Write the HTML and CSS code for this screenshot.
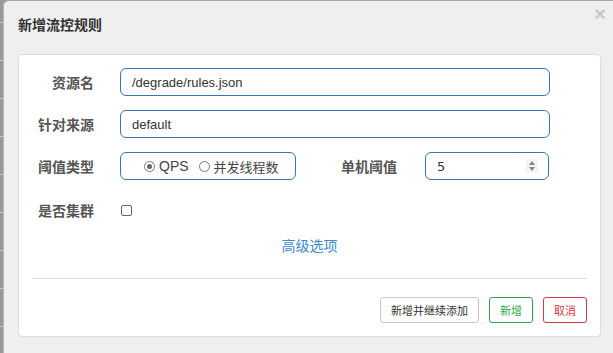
FILE: index.html
```html
<!doctype html>
<html lang="zh-CN">
  <head>
    <meta charset="UTF-8" />
    <title>新增流控规则</title>
    <link rel="stylesheet" href="styles.css">
  </head>
  <body>
    <div class="backdrop-strip"></div>
    <div class="modal">
      <div class="modal-header">
        <h3 class="modal-title">新增流控规则</h3>
        <span class="close">×</span>
      </div>

      <div class="panel">
        <div class="form-row">
          <label class="form-label">资源名</label>
          <div class="text-input">/degrade/rules.json</div>
        </div>

        <div class="form-row">
          <label class="form-label">针对来源</label>
          <div class="text-input">default</div>
        </div>

        <div class="form-row">
          <label class="form-label">阈值类型</label>
          <div class="radio-group">
            <span class="radio checked"></span><span class="radio-text">QPS</span>
            <span class="radio"></span><span class="radio-text">并发线程数</span>
          </div>
          <label class="form-label wide">单机阈值</label>
          <div class="number-input">
            <span>5</span>
            <span class="spinner">
              <i class="arrow-up"></i>
              <i class="arrow-down"></i>
            </span>
          </div>
        </div>

        <div class="form-row short">
          <label class="form-label">是否集群</label>
          <span class="checkbox"></span>
        </div>

        <div class="advanced">
          <a href="#">高级选项</a>
        </div>

        <hr />

        <div class="actions">
          <button class="btn">新增并继续添加</button>
          <button class="btn btn-success">新增</button>
          <button class="btn btn-danger">取消</button>
        </div>
      </div>
    </div>
  </body>
</html>
```

FILE: styles.css
```css
body {
  margin: 0;
  display: flex;
  height: 353px;
  overflow: hidden;
  background: #999;
  font-family: 'Noto Sans CJK SC', 'Liberation Sans', sans-serif;
}

.backdrop-strip {
  width: 3px;
  flex-shrink: 0;
  background: repeating-linear-gradient(to bottom, #999 0, #999 22px, #c8c8c8 22px, #c8c8c8 23px, #999 23px, #999 38px);
}

.modal {
  flex: 1;
  background: #efefef;
  border-top: 1px solid #a8a8a8;
  border-left: 1px solid #b8b8b8;
  border-top-left-radius: 6px;
  padding-left: 14px;
  padding-right: 12px;
}

.modal-header {
  display: flex;
  justify-content: space-between;
  align-items: flex-start;
  height: 53px;
}

.modal-title {
  margin: 13px 0 0 0;
  font-size: 14px;
  line-height: 20px;
  font-weight: bold;
  color: #333;
}

.close {
  margin-top: 3px;
  margin-right: -5px;
  font-size: 20px;
  line-height: 20px;
  font-weight: bold;
  color: #c8c8c8;
  font-family: 'Liberation Sans', sans-serif;
}

.panel {
  background: #fff;
  border: 1px solid #dcdcdc;
  border-radius: 4px;
  padding: 13px 13px 13px 13px;
}

.form-row {
  display: flex;
  align-items: center;
  height: 28px;
  margin-bottom: 14px;
}

.form-row > * {
  flex: none;
}

.form-row.short {
  margin-top: 16px;
  height: 28px;
  margin-bottom: 0;
}

.form-label {
  width: 62px;
  margin-right: 26px;
  text-align: right;
  font-size: 14px;
  font-weight: bold;
  color: #555;
}

.form-label.wide {
  width: 101px;
  margin-right: 28px;
}

.text-input,
.number-input,
.radio-group {
  box-sizing: border-box;
  height: 28px;
  border: 1px solid #3676b6;
  border-radius: 6px;
  display: flex;
  align-items: center;
  font-family: 'Liberation Sans', sans-serif;
  font-size: 13px;
  color: #333;
}

.text-input {
  width: 430px;
  padding-left: 11px;
}

.radio-group {
  width: 176px;
  padding-left: 23px;
}

.radio {
  box-sizing: border-box;
  width: 11px;
  height: 11px;
  border: 1px solid #777;
  border-radius: 50%;
  position: relative;
  margin-right: 4px;
}

.radio.checked::after {
  content: "";
  position: absolute;
  left: 2px;
  top: 2px;
  width: 5px;
  height: 5px;
  border-radius: 50%;
  background: #666;
}

.radio-text {
  margin-right: 10px;
  font-size: 14px;
  color: #444;
}

.radio-text:last-child {
  font-family: 'Noto Sans CJK SC', sans-serif;
  font-size: 13px;
  margin-right: 0;
}

.number-input {
  width: 124px;
  padding: 0 10px 0 11px;
  justify-content: space-between;
  font-family: 'DejaVu Sans', sans-serif;
  font-size: 13px;
}

.spinner {
  display: flex;
  flex-direction: column;
  gap: 2px;
  padding: 2px 3px;
  background: #f4f4f4;
}

.arrow-up,
.arrow-down {
  width: 0;
  height: 0;
  border-left: 3.5px solid transparent;
  border-right: 3.5px solid transparent;
}

.arrow-up {
  border-bottom: 4px solid #888;
}

.arrow-down {
  border-top: 4px solid #888;
}

.checkbox {
  box-sizing: border-box;
  width: 11px;
  height: 11px;
  border: 1px solid #666;
  border-radius: 2px;
  margin-left: 1px;
}

.advanced {
  text-align: center;
  margin-top: 10px;
  line-height: 20px;
}

.advanced a {
  font-size: 14px;
  color: #3a89cb;
  text-decoration: none;
}

hr {
  margin: 23px 0 18px;
  border: none;
  height: 1px;
  background: #ddd;
}

.actions {
  display: flex;
  justify-content: flex-end;
  gap: 10px;
}

.btn {
  height: 26px;
  padding: 0 10px;
  background: #fff;
  border: 1px solid #c8c8c8;
  border-radius: 3px;
  font-family: 'Noto Sans CJK SC', sans-serif;
  font-size: 11px;
  color: #333;
}

.btn-success {
  border-color: #2ca74a;
  color: #2ca74a;
}

.btn-danger {
  border-color: #dc3545;
  color: #dc3545;
}
```
